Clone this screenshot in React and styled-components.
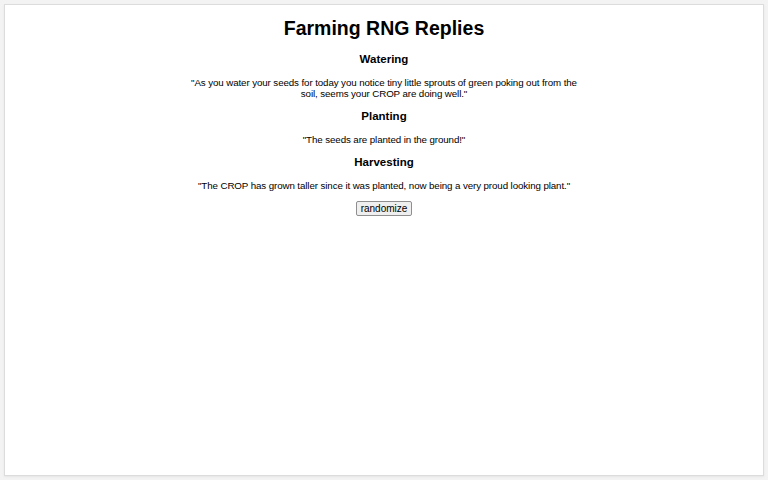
import styled, { createGlobalStyle } from "styled-components";

const GlobalStyle = createGlobalStyle`
  html, body {
    margin: 0;
    background: #f3f3f3;
  }
  body {
    padding: 4px;
    font-family: "Liberation Sans", Arial, sans-serif;
    color: #000;
  }
`;

const Card = styled.div`
  box-sizing: border-box;
  height: 472px;
  background: #fff;
  border: 1px solid #dcdcdc;
  box-shadow: 0 1px 2px rgba(0, 0, 0, 0.06);
  display: flex;
  flex-direction: column;
  align-items: center;
  gap: 10px;
  padding-top: 10px;
`;

const Title = styled.h1`
  margin: 0 0 1px;
  font-size: 19.5px;
  line-height: 26px;
  font-weight: 700;
`;

const Heading = styled.h3`
  margin: 0;
  font-size: 11.5px;
  line-height: 15px;
  font-weight: 700;
`;

const Reply = styled.p`
  margin: 0;
  max-width: 390px;
  font-size: 9.75px;
  line-height: 11px;
  text-align: center;
  letter-spacing: -0.1px;
`;

const Button = styled.button`
  font-family: "Liberation Sans", Arial, sans-serif;
  font-size: 10px;
  line-height: 11px;
  padding: 1px 4px;
  height: 15px;
  background: #efefef;
  border: 1px solid #8f8f8f;
  border-radius: 2px;
  color: #000;
`;

const replies = [
  {
    title: "Watering",
    text:
      '"As you water your seeds for today you notice tiny little sprouts of green poking out from the soil, seems your CROP are doing well."',
  },
  { title: "Planting", text: '"The seeds are planted in the ground!"' },
  {
    title: "Harvesting",
    text: '"The CROP has grown taller since it was planted, now being a very proud looking plant."',
  },
];

const App = () => {
  return (
    <>
      <GlobalStyle />
      <Card>
        <Title>Farming RNG Replies</Title>
        {replies.map((item) => [
          <Heading key={item.title + "-h"}>{item.title}</Heading>,
          <Reply key={item.title + "-p"}>{item.text}</Reply>,
        ])}
        <Button>randomize</Button>
      </Card>
    </>
  );
};

export default App;
